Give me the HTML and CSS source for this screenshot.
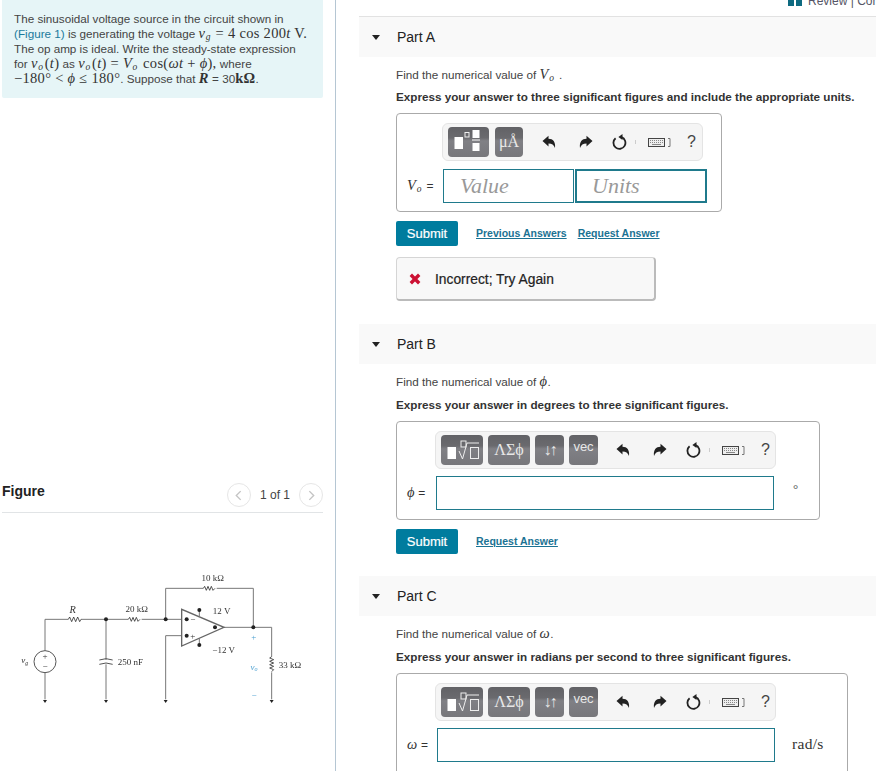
FILE: index.html
```html
<!DOCTYPE html>
<html lang="en">
<head>
<meta charset="utf-8">
<title>Circuit problem</title>
<link rel="stylesheet" href="styles.css">
</head>
<body>
<svg class="defs" aria-hidden="true">
  <symbol id="undo" viewBox="0 0 14 14"><path d="M0.5 6 L6.5 0.8 V3.8 C11 3.8 13.8 7 13 13 C11.8 10 10 8.6 6.5 8.6 V11.4 Z"/></symbol>
  <symbol id="redo" viewBox="0 0 14 14"><path d="M13.5 6 L7.5 0.8 V3.8 C3 3.8 0.2 7 1 13 C2.2 10 4 8.6 7.5 8.6 V11.4 Z"/></symbol>
  <symbol id="reset" viewBox="0 0 16 16"><path d="M3.6 4.200 A6 6 0 1 0 9.500 3.200" fill="none" stroke="#222" stroke-width="1.8"/><path d="M10.500 0 L10.500 6 L6.400 3 Z" fill="#222"/></symbol>
  <symbol id="kbd" viewBox="0 0 23 9"><rect x="0.500" y="0.500" width="16" height="8" fill="#eee" stroke="#444"/><path d="M2 2.500h13M2 4.500h13" stroke="#888" stroke-width="1" stroke-dasharray="1 1"/><path d="M4 6.500h9" stroke="#888"/><path d="M20 0.500h2v8h-2" fill="none" stroke="#777"/></symbol>
  <symbol id="tpl" viewBox="0 0 41 30"><rect x="6.500" y="10" width="8.500" height="12" fill="#fff"/><rect x="17" y="5.500" width="4" height="4.500" fill="none" stroke="#eee"/><rect x="24.500" y="3" width="7" height="8" fill="#fff"/><path d="M24 13h8" stroke="#fff"/><rect x="24.500" y="16" width="7" height="8" fill="#fff"/></symbol>
  <symbol id="rad" viewBox="0 0 42 30"><rect x="6.500" y="12" width="8.500" height="12" fill="#fff"/><rect x="20" y="6" width="5" height="6" fill="none" stroke="#eee"/><path d="M18 16 l3.500 8 l4.500 -16 h12" fill="none" stroke="#eee"/><rect x="29.500" y="12.500" width="8" height="11" fill="none" stroke="#eee"/></symbol>
</svg>

<div class="layout">
  <aside class="left">
    <div class="intro">
      The sinusoidal voltage source in the circuit shown in<br>
      <a class="figlink">(Figure 1)</a> is generating the voltage <i class="m">v<sub>g</sub></i> <span class="m">= 4 cos 200<i>t</i> V.</span><br>
      The op amp is ideal. Write the steady-state expression<br>
      for <i class="m">v<sub>o</sub></i><span class="m">(<i>t</i>)</span> as <i class="m">v<sub>o</sub></i><span class="m">(<i>t</i>) = <i>V<sub>o</sub></i> cos(<i>ωt</i> + <i>ϕ</i>),</span> where<br>
      <span class="m">−180° &lt; <i>ϕ</i> ≤ 180°</span>. Suppose that <i class="m mb">R</i> = 30<span class="m mb">kΩ</span>.
    </div>
    <div class="figure-head">
      <strong class="figure-title">Figure</strong>
      <div class="pager">
        <span class="page-btn"><svg class="chev" viewBox="0 0 8 12"><path d="M6.500 1 L1.500 6 L6.500 11"/></svg></span>
        <span class="page-num">1 of 1</span>
        <span class="page-btn"><svg class="chev" viewBox="0 0 8 12"><path d="M1.500 1 L6.500 6 L1.500 11"/></svg></span>
      </div>
    </div>
    <svg class="circuit" viewBox="0 0 930 450" aria-label="Circuit diagram">
      <g fill="none" stroke="#777" stroke-width="3">
        <path d="M205 163H135V257M135 323V403"/>
        <circle cx="135" cy="290" r="33" stroke="#555"/>
        <path d="M243 163H385M425 163H545M318 163V285M318 298V403"/>
        <path d="M298 285 Q318 277 338 285M298 298 Q318 290 338 298" stroke="#555"/>
        <path d="M497 163V70H610M650 70H760V187M497 212H545M497 212V403M672 187H815V275M815 322V403"/>
        <path d="M545 133V243L672 187Z" stroke="#666" stroke-width="4"/>
        <path d="M598 135V155M598 220V240"/>
        <g stroke="#333" stroke-width="2.500">
          <path d="M205 163l4 -7l6 14l6 -14l6 14l6 -14l6 14l4 -7"/>
          <path d="M385 163l4 -6l5 12l5 -12l5 12l5 -12l5 12l6 -6"/>
          <path d="M610 70l4 -6l5 12l5 -12l5 12l5 -12l5 12l6 -6"/>
          <path d="M815 275l-6 4l12 5l-12 5l12 5l-12 5l12 5l-12 5l12 5l-6 6"/>
        </g>
      </g>
      <g fill="#222">
        <circle cx="318" cy="163" r="6"/><circle cx="497" cy="163" r="6"/><circle cx="560" cy="163" r="6"/><circle cx="560" cy="212" r="6"/><circle cx="598" cy="135" r="6"/><circle cx="598" cy="240" r="6"/><circle cx="645" cy="187" r="6"/><circle cx="760" cy="187" r="6"/>
        <path d="M129 405h12l-6 9zM312 405h12l-6 9zM491 405h12l-6 9zM809 405h12l-6 9z"/>
      </g>
      <g class="ctext">
        <text x="218" y="144" class="ci cl">R</text>
        <text x="410" y="141" text-anchor="middle">20 kΩ</text>
        <text x="638" y="48" text-anchor="middle">10 kΩ</text>
        <text x="665" y="146" text-anchor="middle">12 V</text>
        <text x="671" y="264" text-anchor="middle">−12 V</text>
        <text x="353" y="301">250 nF</text>
        <text x="836" y="309">33 kΩ</text>
        <text x="64" y="295" class="ci">v<tspan class="csub" dy="4">g</tspan></text>
        <text x="135" y="281" text-anchor="middle">+</text>
        <text x="135" y="312" text-anchor="middle">−</text>
        <text x="578" y="172" text-anchor="middle">−</text>
        <text x="578" y="221" text-anchor="middle">+</text>
        <text x="761" y="226" text-anchor="middle" class="cb">+</text>
        <text x="762" y="314" text-anchor="middle" class="ci cb">v<tspan class="csub" dy="3">o</tspan></text>
        <text x="762" y="400" text-anchor="middle" class="cb">−</text>
      </g>
    </svg>
  </aside>

  <main class="right">
    <div class="topbar">
      <span class="review-icon"></span>
      <span class="review-text">Review | Constants</span>
    </div>

    <section class="part">
      <header class="part-head"><span class="caret"></span><h2>Part A</h2></header>
      <p class="q">Find the numerical value of <i class="m qm">V<sub>o</sub></i> .</p>
      <p class="q strong">Express your answer to three significant figures and include the appropriate units.</p>
      <div class="answer a-w">
        <div class="tb tb-a">
          <span class="btn b41"><svg class="ico"><use href="#tpl"/></svg></span>
          <span class="btn b28 bt">μÅ</span>
          <div class="tools">
            <svg class="t-undo"><use href="#undo"/></svg>
            <svg class="t-redo"><use href="#redo"/></svg>
            <svg class="t-reset"><use href="#reset"/></svg>
            <span class="tick"></span>
            <svg class="t-kbd"><use href="#kbd"/></svg>
            <span class="help">?</span>
          </div>
        </div>
        <div class="row row-a">
          <span class="lbl"><i class="m">V<sub>o</sub></i> =</span>
          <input class="inp v" placeholder="Value" aria-label="Value">
          <input class="inp u" placeholder="Units" aria-label="Units">
        </div>
      </div>
      <div class="actions">
        <span class="submit">Submit</span>
        <a class="lnk">Previous Answers</a>
        <a class="lnk">Request Answer</a>
      </div>
      <div class="feedback"><svg class="x" viewBox="0 0 12 12"><path d="M1.800 1.800 L10.200 10.200 M10.200 1.800 L1.800 10.200"/></svg>Incorrect; Try Again</div>
    </section>

    <section class="part pb">
      <header class="part-head"><span class="caret"></span><h2>Part B</h2></header>
      <p class="q">Find the numerical value of <i class="m qm">ϕ</i>.</p>
      <p class="q strong">Express your answer in degrees to three significant figures.</p>
      <div class="answer b-w">
        <div class="tb tb-b">
          <span class="btn b42"><svg class="ico"><use href="#rad"/></svg></span>
          <span class="btn b42 bt">ΛΣϕ</span>
          <span class="btn b29 arrows">↓↑</span>
          <span class="btn b29 vec">vec</span>
          <div class="tools">
            <svg class="t-undo"><use href="#undo"/></svg>
            <svg class="t-redo"><use href="#redo"/></svg>
            <svg class="t-reset"><use href="#reset"/></svg>
            <span class="tick"></span>
            <svg class="t-kbd"><use href="#kbd"/></svg>
            <span class="help">?</span>
          </div>
        </div>
        <div class="row">
          <span class="lbl lb-n"><i class="m">ϕ</i> =</span>
          <input class="inp w" aria-label="Phase">
          <span class="deg">°</span>
        </div>
      </div>
      <div class="actions">
        <span class="submit">Submit</span>
        <a class="lnk">Request Answer</a>
      </div>
    </section>

    <section class="part pc">
      <header class="part-head"><span class="caret"></span><h2>Part C</h2></header>
      <p class="q">Find the numerical value of <i class="m qm">ω</i>.</p>
      <p class="q strong">Express your answer in radians per second to three significant figures.</p>
      <div class="answer c-w">
        <div class="tb tb-b">
          <span class="btn b42"><svg class="ico"><use href="#rad"/></svg></span>
          <span class="btn b42 bt">ΛΣϕ</span>
          <span class="btn b29 arrows">↓↑</span>
          <span class="btn b29 vec">vec</span>
          <div class="tools">
            <svg class="t-undo"><use href="#undo"/></svg>
            <svg class="t-redo"><use href="#redo"/></svg>
            <svg class="t-reset"><use href="#reset"/></svg>
            <span class="tick"></span>
            <svg class="t-kbd"><use href="#kbd"/></svg>
            <span class="help">?</span>
          </div>
        </div>
        <div class="row">
          <span class="lbl lb-c"><i class="m">ω</i> =</span>
          <input class="inp w" aria-label="Angular frequency">
          <span class="unit">rad/s</span>
        </div>
      </div>
    </section>
  </main>
</div>
</body>
</html>
```

FILE: styles.css
```css
html, body { margin: 0; padding: 0; height: 771px; overflow: hidden; background: #fff; }
body { font-family: "Liberation Sans", Arial, sans-serif; color: #333; font-size: 11.7px; }
.defs { position: absolute; width: 0; height: 0; }

.layout { display: flex; height: 771px; }

/* left */
.left { width: 335px; flex: none; border-right: 1px solid #b5c6d3; }
.intro { margin: 0 12px 0 2px; height: 98px; box-sizing: border-box; padding: 11px 0 0 12px; background: #e6f5f7; line-height: 15px; font-size: 11.7px; color: #444; border-radius: 0 0 2px 2px; white-space: nowrap; }
.figlink { color: #1a7a9c; }
.m { font-family: "Liberation Serif", serif; font-size: 14.5px; line-height: 0; color: #333; letter-spacing: 0.3px; }
.m sub { font-size: 9.5px; line-height: 0; vertical-align: -2px; margin-left: 0.5px; margin-right: 1.5px; }
.mb { font-weight: bold; }
.figure-head { display: flex; align-items: flex-start; justify-content: space-between; margin: 385px 12px 0 2px; height: 29px; border-bottom: 1px solid #e1e4e6; }
.figure-title { font-size: 14px; line-height: 16px; color: #222; }
.pager { display: flex; align-items: center; gap: 9px; }
.page-btn { width: 22px; height: 22px; border: 1px solid #e6e6e6; border-radius: 50%; display: flex; align-items: center; justify-content: center; }
.chev { width: 7px; height: 11px; fill: none; stroke: #c4c4c4; stroke-width: 1.6; }
.page-num { font-size: 12px; color: #444; }
.circuit { display: block; width: 310px; height: 150px; margin-top: 52px; filter: blur(0.4px); }
.ctext text { font-family: "Liberation Serif", serif; font-size: 27px; fill: #333; }
.ctext .ci { font-style: italic; }
.ctext .cl { font-size: 31px; text-anchor: middle; }
.ctext .csub { font-size: 18px; }
.ctext .cb { fill: #4a9fd0; }

/* right */
.right { flex: 1; min-width: 0; padding-left: 23px; overflow: hidden; }
.topbar { height: 16px; box-sizing: border-box; display: flex; align-items: flex-end; padding: 0 0 8px 429px; white-space: nowrap; }
.review-icon { width: 14px; height: 6px; flex: none; margin: 0 6px 2px 0; background: linear-gradient(90deg, #0e6a80 46%, #fff 46%, #fff 54%, #0e6a80 54%); }
.review-text { font-size: 12px; line-height: 14px; color: #556; }

.part-head { display: flex; align-items: center; height: 40px; background: #f9f9f9; border-top: 1px solid #e2e2e2; }
.part.pb .part-head, .part.pc .part-head { border-top: 0; }
.part.pb { margin-top: 23px; }
.part.pc { margin-top: 22px; }
.caret { width: 0; height: 0; margin: 1px 0 0 13px; border-left: 4.5px solid transparent; border-right: 4.5px solid transparent; border-top: 5px solid #222; }
.part-head h2 { margin: 0 0 0 17px; font-size: 14px; font-weight: normal; color: #222; }
.q { margin: 11px 0 0 37px; font-size: 11.7px; line-height: 14px; color: #444; white-space: nowrap; }
.q + .q { margin-top: 8px; }
.q.strong { font-weight: bold; color: #333; }
.part.pb .q + .q, .part.pc .q + .q { margin-top: 9px; }
.qm { font-size: 14.5px; }

.answer { margin: 9px 0 0 37px; border: 1px solid #aaa; border-radius: 4px; box-sizing: border-box; height: 99px; padding-top: 9px; }
.a-w { width: 326px; }
.b-w { width: 424px; }
.c-w { width: 452px; height: 110px; }
.tb { height: 38px; box-sizing: border-box; background: #f5f5f5; border: 1px solid #e4e4e4; border-radius: 6px; display: flex; align-items: center; gap: 5px; padding-left: 5px; }
.tb-a { width: 261px; margin-left: 45px; gap: 6px; }
.tb-b { width: 341px; margin-left: 38px; }
.btn { height: 30px; border-radius: 4px; flex: none; display: flex; align-items: center; justify-content: center; background: linear-gradient(#626266 0, #6a6a6e 36%, #808085 46%, #77777b 100%); color: #e8e8e8; }
.b41 { width: 41px; }
.b42 { width: 42px; }
.b28 { width: 28px; }
.b29 { width: 29px; }
.bt { font-family: "Liberation Serif", serif; font-size: 16px; }
.arrows { font-family: "Liberation Sans", sans-serif; font-size: 16px; letter-spacing: -2px; }
.vec { font-size: 13px; align-items: flex-start; padding-top: 4px; height: 26px; }
.ico { width: 100%; height: 100%; }
.tools { display: flex; align-items: center; margin-left: 13px; fill: #222; }
.t-undo { width: 14px; height: 14px; margin-right: 23px; }
.t-redo { width: 14px; height: 14px; margin-right: 19px; }
.t-reset { width: 16px; height: 16px; margin-right: 7px; }
.tick { width: 1px; height: 4px; background: #ccc; margin-right: 12px; }
.t-kbd { width: 23px; height: 9px; margin-right: 16px; }
.help { font-size: 16px; color: #444; }

.row { display: flex; align-items: center; margin-top: 7px; }
.row-a { margin-top: 8px; }
.lbl { font-size: 12px; color: #333; margin-left: 10px; width: 36px; flex: none; white-space: nowrap; }
.lb-n { width: 29px; }
.lb-c { width: 30px; }
.inp { box-sizing: border-box; height: 34px; border: 1px solid #1f7a8c; background: #fff; outline: none; margin: 0; padding: 0 0 0 16px; font-family: "Liberation Serif", serif; font-style: italic; font-size: 22px; border-radius: 0; }
.inp::placeholder { color: #999; opacity: 1; }
.inp.v { width: 131px; }
.inp.u { width: 132px; margin-left: 1px; border-width: 2px; padding-left: 15px; }
.inp.w { width: 338px; }
.deg { font-family: "Liberation Serif", serif; font-size: 13px; margin: -8px 0 0 19px; color: #555; }
.unit { font-family: "Liberation Serif", serif; font-size: 15.5px; letter-spacing: 0.3px; margin: -2px 0 0 17px; color: #333; }

.actions { display: flex; align-items: center; margin: 9px 0 0 37px; height: 25px; gap: 11px; }
.submit { width: 62px; height: 25px; flex: none; background: #007c9e; color: #fff; font-size: 13px; -webkit-text-stroke: 0.2px #fff; border-radius: 2px; display: flex; align-items: center; justify-content: center; margin-right: 7px; }
.lnk { font-size: 10.5px; font-weight: bold; color: #1b7293; text-decoration: underline; white-space: nowrap; margin-top: -2px; }
.feedback { margin: 11px 0 0 37px; width: 260px; height: 44px; box-sizing: border-box; background: #f8f8f8; border: 1px solid #d5d5d5; border-right: 2px solid #bbb; border-bottom: 2px solid #bbb; border-radius: 4px; display: flex; align-items: center; font-size: 13.8px; -webkit-text-stroke: 0.2px #222; color: #222; padding: 1px 0 0 12px; }
.x { width: 12px; height: 12px; flex: none; margin-right: 14px; fill: none; stroke: #cc1133; stroke-width: 3.4; }
```
